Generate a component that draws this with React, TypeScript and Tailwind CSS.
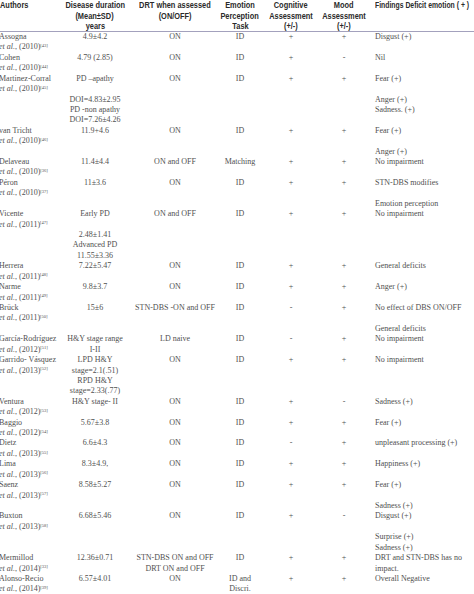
import React from 'react';

type Line = {
  a?: string; // author name
  y?: string; // year for "et al." line
  r?: string; // reference number
  d?: string; // disease duration
  t?: string; // DRT
  e?: string; // emotion task
  c?: string; // cognitive
  m?: string; // mood
  f?: string; // findings
};

const lines: Line[] = [
  { a: 'Assogna', d: '4.9±4.2', t: 'ON', e: 'ID', c: '+', m: '+', f: 'Disgust (+)' },
  { y: '2010', r: '43' },
  { a: 'Cohen', d: '4.79 (2.85)', t: 'ON', e: 'ID', c: '+', m: '-', f: 'Nil' },
  { y: '2010', r: '44' },
  { a: 'Martinez-Corral', d: 'PD –apathy', t: 'ON', e: 'ID', c: '+', m: '+', f: 'Fear (+)' },
  { y: '2010', r: '45' },
  { d: 'DOI=4.83±2.95', f: 'Anger (+)' },
  { d: 'PD -non apathy', f: 'Sadness. (+)' },
  { d: 'DOI=7.26±4.26' },
  { a: 'van Tricht', d: '11.9+4.6', t: 'ON', e: 'ID', c: '+', m: '+', f: 'Fear (+)' },
  { y: '2010', r: '46' },
  { f: 'Anger (+)' },
  { a: 'Delaveau', d: '11.4±4.4', t: 'ON and OFF', e: 'Matching', c: '+', m: '+', f: 'No impairment' },
  { y: '2010', r: '36' },
  { a: 'Péron', d: '11±3.6', t: 'ON', e: 'ID', c: '+', m: '+', f: 'STN-DBS modifies' },
  { y: '2010', r: '37' },
  { f: 'Emotion perception' },
  { a: 'Vicente', d: 'Early PD', t: 'ON and OFF', e: 'ID', c: '+', m: '+', f: 'No impairment' },
  { y: '2011', r: '47' },
  { d: '2.48±1.41' },
  { d: 'Advanced PD' },
  { d: '11.55±3.36' },
  { a: 'Herrera', d: '7.22±5.47', t: 'ON', e: 'ID', c: '+', m: '+', f: 'General deficits' },
  { y: '2011', r: '48' },
  { a: 'Narme', d: '9.8±3.7', t: 'ON', e: 'ID', c: '+', m: '+', f: 'Anger (+)' },
  { y: '2011', r: '49' },
  { a: 'Brück', d: '15±6', t: 'STN-DBS -ON and OFF', e: 'ID', c: '-', m: '+', f: 'No effect of DBS ON/OFF' },
  { y: '2011', r: '50' },
  { f: 'General deficits' },
  { a: 'García-Rodríguez', d: 'H&Y stage range', t: 'LD naive', e: 'ID', c: '-', m: '+', f: 'No impairment' },
  { y: '2012', r: '51', d: 'I-II' },
  { a: 'Garrido- Vásquez', d: 'LPD H&Y', t: 'ON', e: 'ID', c: '+', m: '+', f: 'No impairment' },
  { y: '2013', r: '52', d: 'stage=2.1(.51)' },
  { d: 'RPD H&Y' },
  { d: 'stage=2.33(.77)' },
  { a: 'Ventura', d: 'H&Y stage- II', t: 'ON', e: 'ID', c: '+', m: '-', f: 'Sadness (+)' },
  { y: '2012', r: '53' },
  { a: 'Baggio', d: '5.67±3.8', t: 'ON', e: 'ID', c: '+', m: '+', f: 'Fear (+)' },
  { y: '2012', r: '54' },
  { a: 'Dietz', d: '6.6±4.3', t: 'ON', e: 'ID', c: '-', m: '+', f: 'unpleasant processing (+)' },
  { y: '2013', r: '55' },
  { a: 'Lima', d: '8.3±4.9,', t: 'ON', e: 'ID', c: '+', m: '+', f: 'Happiness (+)' },
  { y: '2013', r: '56' },
  { a: 'Saenz', d: '8.58±5.27', t: 'ON', e: 'ID', c: '+', m: '+', f: 'Fear (+)' },
  { y: '2013', r: '57' },
  { f: 'Sadness (+)' },
  { a: 'Buxton', d: '6.68±5.46', t: 'ON', e: 'ID', c: '+', m: '-', f: 'Disgust (+)' },
  { y: '2013', r: '58' },
  { f: 'Surprise (+)' },
  { f: 'Sadness (+)' },
  { a: 'Mermillod', d: '12.36±0.71', t: 'STN-DBS ON and OFF', e: 'ID', c: '+', m: '+', f: 'DRT and STN-DBS has no' },
  { y: '2014', r: '33', t: 'DRT ON and OFF', f: 'impact.' },
  { a: 'Alonso-Recio', d: '6.57±4.01', t: 'ON', e: 'ID and', c: '+', m: '+', f: 'Overall Negative' },
  { y: '2014', r: '39', e: 'Discri.' },
];

const grid = 'grid grid-cols-[62px_66px_94px_36px_66px_40px_110px]';
const head = { fontFamily: '"Liberation Sans", Arial, sans-serif' };
const body = { fontFamily: '"Liberation Serif", "Times New Roman", serif' };

// header face in the reference is a condensed grotesque; squeeze a regular bold to match
function HeadCell({ rows, left }: { rows: string[]; left?: boolean }) {
  return (
    <div className={`flex flex-col whitespace-nowrap ${left ? 'items-start' : 'items-center'}`}>
      {rows.map((r) => (
        <span key={r} className={`inline-block scale-x-[0.78] ${left ? 'origin-left' : 'origin-center'}`}>
          {r}
        </span>
      ))}
    </div>
  );
}

function Center({ children }: { children?: React.ReactNode }) {
  return <div className="flex justify-center whitespace-nowrap">{children}</div>;
}

export default function App() {
  return (
    <div className="w-[474px] h-[594px] overflow-hidden bg-white">
      {/* Header */}
      <div
        className={`${grid} h-[32px] border-b border-[#a3a1bd] text-[9.5px] leading-[10.6px] font-bold text-[#2a2a2a]`}
        style={head}
      >
        <HeadCell rows={['Authors']} left />
        <HeadCell rows={['Disease duration', '(Mean±SD)', 'years']} />
        <HeadCell rows={['DRT when assessed', '(ON/OFF)']} />
        <HeadCell rows={['Emotion', 'Perception', 'Task']} />
        <HeadCell rows={['Cognitive', 'Assessment', '(+/-)']} />
        <HeadCell rows={['Mood', 'Assessment', '(+/-)']} />
        <div className="pl-[11px] whitespace-nowrap">
          <span className="inline-block scale-x-[0.72] origin-left">Findings Deficit emotion ( + )</span>
        </div>
      </div>

      {/* Body */}
      <div className="text-[8px] text-[#505050]" style={body}>
        {lines.map((l, i) => (
          <div key={i} className={`${grid} h-[10.43px] leading-[10.43px]`}>
            <div className="-ml-px whitespace-nowrap">
              {l.a}
              {l.y && (
                <>
                  <i>et al.</i>, ({l.y})<sup className="text-[4.5px]">[{l.r}]</sup>
                </>
              )}
            </div>
            <Center>{l.d}</Center>
            <Center>{l.t}</Center>
            <Center>{l.e}</Center>
            <Center>{l.c}</Center>
            <Center>{l.m}</Center>
            <div className="pl-[11px] whitespace-nowrap">{l.f}</div>
          </div>
        ))}
      </div>
    </div>
  );
}
